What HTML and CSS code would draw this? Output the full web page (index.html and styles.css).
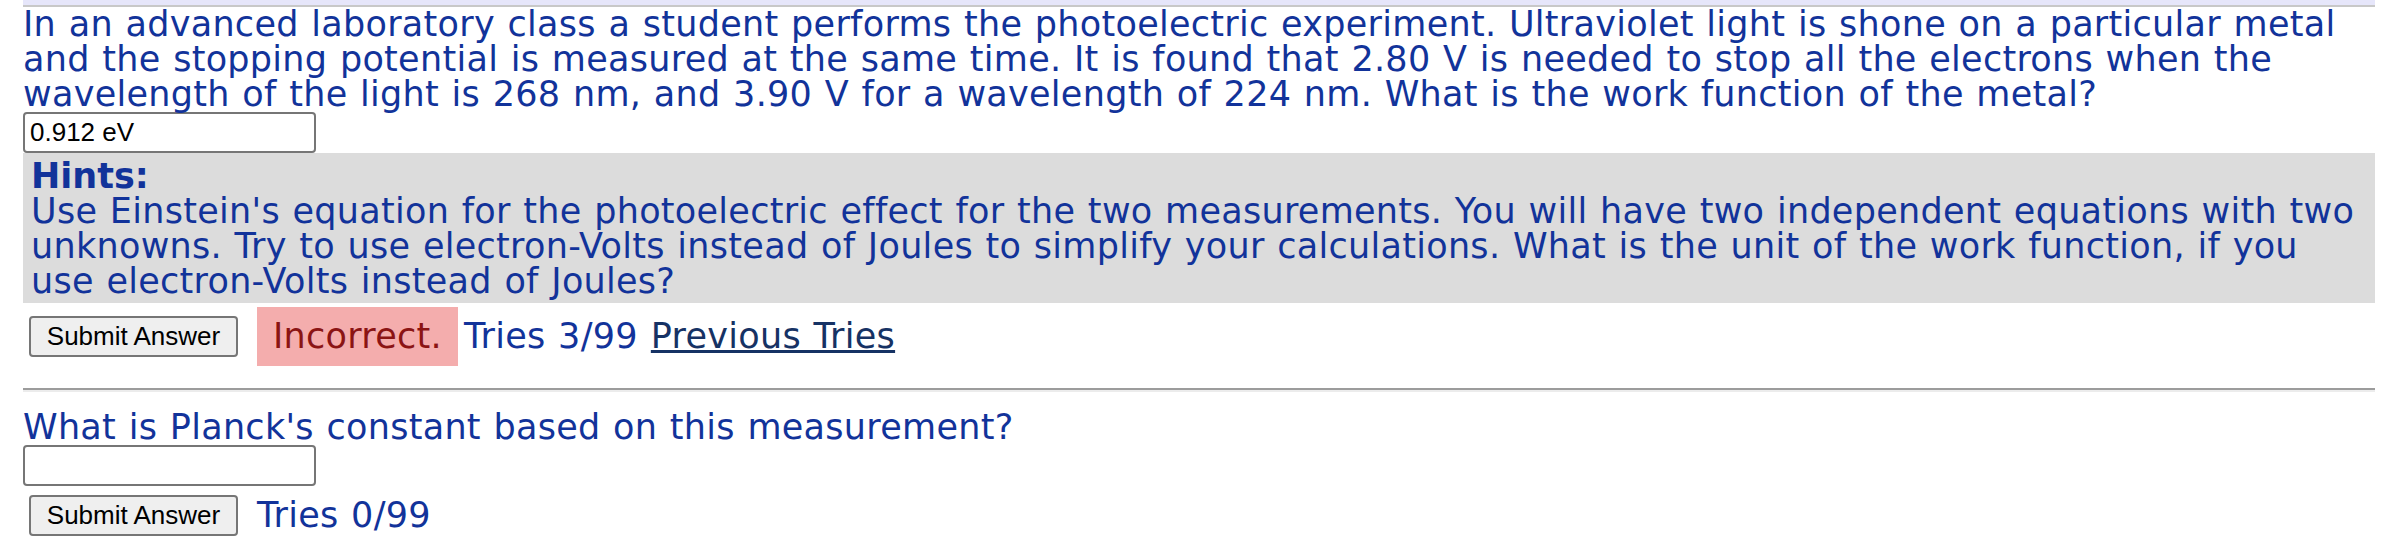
FILE: index.html
```html
<!DOCTYPE html>
<html lang="en">
<head>
    <meta charset="UTF-8">
    <title>Problem</title>
    <link rel="stylesheet" href="styles.css">
</head>
<body>
    <div class="topbar"></div>

    <div class="part">
        <div class="question">In an advanced laboratory class a student performs the photoelectric experiment. Ultraviolet light is shone on a particular metal and the stopping potential is measured at the same time. It is found that 2.80 V is needed to stop all the electrons when the wavelength of the light is 268 nm, and 3.90 V for a wavelength of 224 nm. What is the work function of the metal?</div>
        <input class="answer" type="text" value="0.912 eV">
        <div class="hints">
            <div class="hints-title">Hints:</div>
            Use Einstein's equation for the photoelectric effect for the two measurements. You will have two independent equations with two unknowns. Try to use electron-Volts instead of Joules to simplify your calculations. What is the unit of the work function, if you use electron-Volts instead of Joules?
        </div>
        <div class="submit-row">
            <button class="submit">Submit Answer</button>
            <span class="incorrect">Incorrect.</span>
            <span class="tries">Tries 3/99</span>
            <a class="previous" href="#">Previous Tries</a>
        </div>
    </div>

    <hr class="sep">

    <div class="part">
        <div class="question second">What is Planck's constant based on this measurement?</div>
        <input class="answer" type="text" value="">
        <div class="submit-row second-row">
            <button class="submit">Submit Answer</button>
            <span class="tries">Tries 0/99</span>
        </div>
    </div>
</body>
</html>
```

FILE: styles.css
```css
body {
    margin: 0 10px 0 23px;
    background-color: #fff;
    color: #12339a;
    font-family: "DejaVu Sans", Verdana, sans-serif;
    font-size: 35px;
    line-height: 35px;
    letter-spacing: 0.008em;
    word-spacing: 0.034em;
}

.topbar {
    height: 5px;
    background-color: #e6e6fa;
    border-bottom: 2px solid #c8c8c8;
}

.question {
    margin: 0;
}

.answer {
    display: block;
    box-sizing: border-box;
    width: 293px;
    height: 41px;
    margin: 0;
    padding: 0 5px;
    border: 2px solid #767676;
    border-radius: 4px;
    font-family: "Liberation Sans", Arial, sans-serif;
    font-size: 26px;
    letter-spacing: 0;
    word-spacing: 0;
    color: #000;
}

.hints {
    background-color: #dcdcdc;
    padding: 6px 8px 4px 8px;
}

.hints-title {
    font-weight: bold;
    letter-spacing: 0;
}

.submit-row {
    display: flex;
    align-items: center;
    margin-top: 4px;
}

.submit {
    box-sizing: border-box;
    width: 209px;
    height: 41px;
    margin: 0 19px 0 6px;
    padding: 0;
    background-color: #efefef;
    border: 2px solid #767676;
    border-radius: 4px;
    font-family: "Liberation Sans", Arial, sans-serif;
    font-size: 26px;
    letter-spacing: 0;
    word-spacing: 0;
    color: #000;
}

.incorrect {
    background-color: #f4adad;
    color: #8b1414;
    padding: 12px 16px 12px 16px;
    margin-right: 6px;
}

.tries {
    margin-right: 13px;
}

.previous {
    color: #163264;
}

.sep {
    margin: 22px 0 0 0;
    height: 0;
    border: none;
    border-top: 2px solid #9c9c9c;
    border-bottom: 2px solid #ececec;
}

.question.second {
    margin-top: 18px;
}

.second-row {
    margin-top: 9px;
}
```
